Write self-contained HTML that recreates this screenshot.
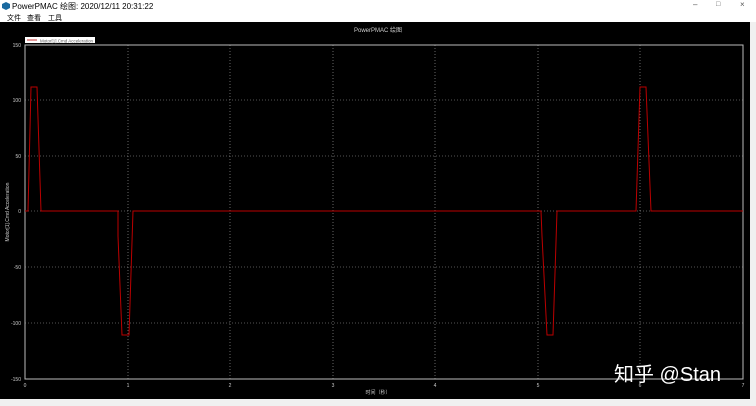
<!DOCTYPE html>
<html><head><meta charset="utf-8"><style>
body{margin:0;width:756px;height:406px;overflow:hidden;background:#f0f0f0;font-family:"Liberation Sans","Noto Sans CJK SC",sans-serif;position:relative}
.tb{position:absolute;left:0;top:0;width:756px;height:12px;background:#fff;font-size:8px;color:#000}
.mb{position:absolute;left:0;top:12px;width:756px;height:10px;background:#fff;font-size:7px;color:#000}
</style></head><body>
<div class="tb"><svg style="position:absolute;left:2px;top:2px" width="8" height="8"><polygon points="4,0 8,2 8,6 4,8 0,6 0,2" fill="#1a6aa0"/></svg><span style="position:absolute;left:12px;top:1px">PowerPMAC 绘图: 2020/12/11 20:31:22</span>
<span style="position:absolute;left:693px;top:0px;color:#555">–</span><span style="position:absolute;left:716px;top:1px;color:#555;font-size:7px">□</span><span style="position:absolute;left:740px;top:0px;color:#555">×</span></div>
<div class="mb"><span style="position:absolute;left:7px;top:1px">文件</span><span style="position:absolute;left:27px;top:1px">查看</span><span style="position:absolute;left:48px;top:1px">工具</span></div>
<svg style="position:absolute;left:0;top:22px" width="750" height="377" viewBox="0 22 750 377">
<rect x="0" y="22" width="750" height="377" fill="#000"/>
<g stroke="#aaa" stroke-width="0.6" stroke-dasharray="1,2">
<line x1="128" y1="45" x2="128" y2="379"/><line x1="230" y1="45" x2="230" y2="379"/><line x1="333" y1="45" x2="333" y2="379"/><line x1="435" y1="45" x2="435" y2="379"/><line x1="538" y1="45" x2="538" y2="379"/><line x1="640" y1="45" x2="640" y2="379"/>
<line x1="25" y1="100" x2="743" y2="100"/><line x1="25" y1="156" x2="743" y2="156"/><line x1="25" y1="211" x2="743" y2="211"/><line x1="25" y1="267" x2="743" y2="267"/><line x1="25" y1="323" x2="743" y2="323"/>
</g>
<rect x="25" y="45" width="718" height="334" fill="none" stroke="#bbb" stroke-width="1"/>
<polyline fill="none" stroke="#b00" stroke-width="1" points="25,211 28,211 31,87 37,87 41,211 118,211 118,236 122,335 129,335 133,211 541,211 542,236 547,335 553,335 557,211 636,211 640,87 646,87 651,211 743,211"/>
<rect x="25" y="37" width="70" height="6" fill="#fff"/>
<line x1="27" y1="40" x2="37" y2="40" stroke="#b00" stroke-width="0.8"/>
<text x="40" y="42.5" font-size="4.5" fill="#555">Motor[1].Cmd Acceleration</text>
<g fill="#ccc" font-size="5" text-anchor="end">
<text x="21" y="47">150</text><text x="21" y="102">100</text><text x="21" y="158">50</text><text x="21" y="213">0</text><text x="21" y="269">-50</text><text x="21" y="325">-100</text><text x="21" y="381">-150</text></g>
<g fill="#ccc" font-size="5" text-anchor="middle">
<text x="25" y="387">0</text><text x="128" y="387">1</text><text x="230" y="387">2</text><text x="333" y="387">3</text><text x="435" y="387">4</text><text x="538" y="387">5</text><text x="640" y="387">6</text><text x="743" y="387">7</text>
<text x="378" y="32" font-size="6">PowerPMAC 绘图</text>
<text x="378" y="394" font-size="5">时间（秒）</text></g>
<text transform="translate(9,212) rotate(-90)" fill="#ccc" font-size="5" text-anchor="middle">Motor[1].Cmd Acceleration</text>
<text x="614" y="381" fill="#fff" font-size="20" font-family="Liberation Sans,Noto Sans CJK SC,sans-serif">知乎 @Stan</text>
</svg>
</body></html>
